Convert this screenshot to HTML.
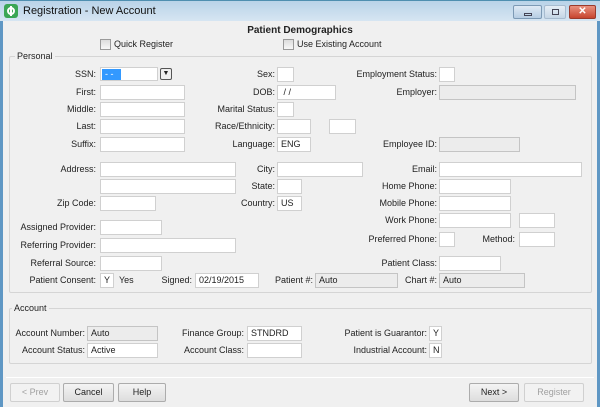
<!DOCTYPE html>
<html><head><style>
*{margin:0;padding:0;box-sizing:border-box}
body{width:600px;height:407px;overflow:hidden;background:#fff;font-family:"Liberation Sans",sans-serif;font-size:9px;color:#222;position:relative}
.win{position:absolute;left:0;top:0;width:600px;height:407px;background:#f0f0f0;border-left:3px solid #5f97c4;border-right:3px solid #5f97c4}
.title{position:absolute;left:0;top:0;width:600px;height:21px;background:linear-gradient(#b9d3e8,#d6e5f2);border-top:1px solid #4f8fb0}
.l{position:absolute;white-space:nowrap;text-align:right;line-height:14px}
.t{position:absolute;white-space:nowrap;line-height:14px}
.b{position:absolute;height:15px;background:#fff;border:1px solid #d0d0d0;padding-left:3px;line-height:13px;font-size:9px}
.g{background:#ececec;border-color:#c4c4c4}
.grp{position:absolute;border:1px solid #d5d5d5;border-radius:2px}
.gl{position:absolute;background:#f0f0f0;padding:0 2px;line-height:10px}
.btn{position:absolute;top:383px;height:19px;border:1px solid #acacac;border-radius:2px;background:linear-gradient(#f4f4f4,#dddddd);text-align:center;line-height:17px;font-size:9px}
.dis{color:#a0a0a0;background:#f2f2f2;border-color:#d0d0d0}
.cb{position:absolute;width:11px;height:11px;border:1px solid #9a9a9a;background:linear-gradient(#ddd,#f8f8f8)}
</style></head><body>
<div class="win"></div>
<div class="title">
 <div style="position:absolute;left:4px;top:3px;width:14px;height:14px;border-radius:3px;background:#3aa655"><div style="position:absolute;left:3px;top:3px;width:8px;height:8px;border-radius:50%;border:2px solid #fff"></div><div style="position:absolute;left:6px;top:2px;width:2px;height:10px;background:#fff"></div></div>
 <div class="t" style="left:23px;top:3px;font-size:11px;color:#111">Registration - New Account</div>
 <div style="position:absolute;left:513px;top:4px;width:29px;height:14px;border:1px solid #7d9ab5;border-radius:2px;background:linear-gradient(#dfeaf5,#b6cde3)"><div style="position:absolute;left:10px;top:7px;width:8px;height:3px;border:1px solid #445"></div></div>
 <div style="position:absolute;left:544px;top:4px;width:22px;height:14px;border:1px solid #a8bcd0;border-radius:2px;background:linear-gradient(#e6eef6,#c5d6e6)"><div style="position:absolute;left:7px;top:3px;width:7px;height:6px;border:1px solid #445"></div></div>
 <div style="position:absolute;left:569px;top:4px;width:27px;height:14px;border:1px solid #9a3a2c;border-radius:2px;background:linear-gradient(#e8907e,#c7452f);color:#fff;font-weight:bold;font-size:10px;text-align:center;line-height:12px">✕</div>
</div>

<div class="t" style="left:0;width:600px;text-align:center;top:24px;font-weight:bold;font-size:10px">Patient Demographics</div>
<div class="cb" style="left:100px;top:39px"></div><div class="t" style="left:114px;top:37px">Quick Register</div>
<div class="cb" style="left:283px;top:39px"></div><div class="t" style="left:297px;top:37px">Use Existing Account</div>

<div class="grp" style="left:9px;top:56px;width:583px;height:237px"></div>
<div class="gl" style="left:15px;top:51px">Personal</div>

<div class="l" style="right:504px;top:67px">SSN:</div>
<div class="b" style="left:100px;top:67px;width:58px;height:14px;padding:0"><div style="position:absolute;left:1px;top:1px;width:19px;height:11px;background:#3399ff;color:#fff;line-height:10px;padding-left:3px">- -</div></div>
<div style="position:absolute;left:160px;top:68px;width:12px;height:12px;border:1px solid #555;border-radius:2px;background:#eee;font-size:7px;text-align:center;line-height:10px">▼</div>
<div class="l" style="right:325px;top:67px">Sex:</div><div class="b" style="left:277px;top:67px;width:17px"></div>
<div class="l" style="right:163px;top:67px">Employment Status:</div><div class="b" style="left:439px;top:67px;width:16px"></div>

<div class="l" style="right:504px;top:85px">First:</div><div class="b" style="left:100px;top:85px;width:85px"></div>
<div class="l" style="right:325px;top:85px">DOB:</div><div class="b" style="left:277px;top:85px;width:59px">&nbsp;/ /</div>
<div class="l" style="right:163px;top:85px">Employer:</div><div class="b g" style="left:439px;top:85px;width:137px"></div>

<div class="l" style="right:504px;top:102px">Middle:</div><div class="b" style="left:100px;top:102px;width:85px"></div>
<div class="l" style="right:325px;top:102px">Marital Status:</div><div class="b" style="left:277px;top:102px;width:17px"></div>

<div class="l" style="right:504px;top:119px">Last:</div><div class="b" style="left:100px;top:119px;width:85px"></div>
<div class="l" style="right:325px;top:119px">Race/Ethnicity:</div><div class="b" style="left:277px;top:119px;width:34px"></div><div class="b" style="left:329px;top:119px;width:27px"></div>

<div class="l" style="right:504px;top:137px">Suffix:</div><div class="b" style="left:100px;top:137px;width:85px"></div>
<div class="l" style="right:325px;top:137px">Language:</div><div class="b" style="left:277px;top:137px;width:34px">ENG</div>
<div class="l" style="right:163px;top:137px">Employee ID:</div><div class="b g" style="left:439px;top:137px;width:81px"></div>

<div class="l" style="right:504px;top:162px">Address:</div><div class="b" style="left:100px;top:162px;width:136px"></div>
<div class="l" style="right:325px;top:162px">City:</div><div class="b" style="left:277px;top:162px;width:86px"></div>
<div class="l" style="right:163px;top:162px">Email:</div><div class="b" style="left:439px;top:162px;width:143px"></div>

<div class="b" style="left:100px;top:179px;width:136px"></div>
<div class="l" style="right:325px;top:179px">State:</div><div class="b" style="left:277px;top:179px;width:25px"></div>
<div class="l" style="right:163px;top:179px">Home Phone:</div><div class="b" style="left:439px;top:179px;width:72px"></div>

<div class="l" style="right:504px;top:196px">Zip Code:</div><div class="b" style="left:100px;top:196px;width:56px"></div>
<div class="l" style="right:325px;top:196px">Country:</div><div class="b" style="left:277px;top:196px;width:25px">US</div>
<div class="l" style="right:163px;top:196px">Mobile Phone:</div><div class="b" style="left:439px;top:196px;width:72px"></div>

<div class="l" style="right:163px;top:213px">Work Phone:</div><div class="b" style="left:439px;top:213px;width:72px"></div><div class="b" style="left:519px;top:213px;width:36px"></div>
<div class="l" style="right:504px;top:220px">Assigned Provider:</div><div class="b" style="left:100px;top:220px;width:62px"></div>
<div class="l" style="right:163px;top:232px">Preferred Phone:</div><div class="b" style="left:439px;top:232px;width:16px"></div>
<div class="l" style="right:85px;top:232px">Method:</div><div class="b" style="left:519px;top:232px;width:36px"></div>
<div class="l" style="right:504px;top:238px">Referring Provider:</div><div class="b" style="left:100px;top:238px;width:136px"></div>

<div class="l" style="right:504px;top:256px">Referral Source:</div><div class="b" style="left:100px;top:256px;width:62px"></div>
<div class="l" style="right:163px;top:256px">Patient Class:</div><div class="b" style="left:439px;top:256px;width:62px"></div>

<div class="l" style="right:504px;top:273px">Patient Consent:</div><div class="b" style="left:100px;top:273px;width:14px">Y</div><div class="t" style="left:119px;top:273px">Yes</div>
<div class="l" style="right:408px;top:273px">Signed:</div><div class="b" style="left:195px;top:273px;width:64px">02/19/2015</div>
<div class="l" style="right:287px;top:273px">Patient #:</div><div class="b g" style="left:315px;top:273px;width:83px">Auto</div>
<div class="l" style="right:163px;top:273px">Chart #:</div><div class="b g" style="left:439px;top:273px;width:86px">Auto</div>

<div class="grp" style="left:9px;top:308px;width:583px;height:56px"></div>
<div class="gl" style="left:12px;top:303px">Account</div>
<div class="l" style="right:515px;top:326px">Account Number:</div><div class="b g" style="left:87px;top:326px;width:71px">Auto</div>
<div class="l" style="right:356px;top:326px">Finance Group:</div><div class="b" style="left:247px;top:326px;width:55px">STNDRD</div>
<div class="l" style="right:173px;top:326px">Patient is Guarantor:</div><div class="b" style="left:429px;top:326px;width:13px">Y</div>
<div class="l" style="right:515px;top:343px">Account Status:</div><div class="b" style="left:87px;top:343px;width:71px">Active</div>
<div class="l" style="right:356px;top:343px">Account Class:</div><div class="b" style="left:247px;top:343px;width:55px"></div>
<div class="l" style="right:173px;top:343px">Industrial Account:</div><div class="b" style="left:429px;top:343px;width:13px">N</div>

<div style="position:absolute;left:6px;top:377px;width:588px;height:1px;background:#d4d4d4;border-bottom:1px solid #fff"></div>
<div class="btn dis" style="left:10px;width:50px">&lt; Prev</div>
<div class="btn" style="left:63px;width:51px">Cancel</div>
<div class="btn" style="left:118px;width:48px">Help</div>
<div class="btn" style="left:469px;width:50px">Next &gt;</div>
<div class="btn dis" style="left:524px;width:60px">Register</div>
</body></html>
